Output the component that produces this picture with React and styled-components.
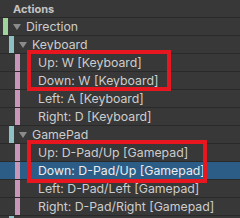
import styled, { createGlobalStyle } from 'styled-components';

const GlobalStyle = createGlobalStyle`
  html, body {
    margin: 0;
    padding: 0;
    background: #383838;
  }
  body {
    font-family: Inter, "Noto Sans", sans-serif;
    overflow: hidden;
  }
`;

const Panel = styled.div`
  position: relative;
  width: 240px;
  height: 218px;
  background: #383838;
  overflow: hidden;
`;

const Header = styled.div`
  height: 17px;
  border-bottom: 1px solid #2a2a2a;
  display: flex;
  align-items: center;
  padding-left: 13px;
  font-size: 11px;
  font-weight: 700;
  color: #c4c4c4;
`;

const Row = styled.div`
  height: 17px;
  border-bottom: 1px solid #2a2a2a;
  display: flex;
  align-items: stretch;
  background: ${(p) => (p.$selected ? '#2c5d87' : 'transparent')};
  color: ${(p) => (p.$selected ? '#ededed' : '#cdcdcd')};
  font-size: 12.3px;
  white-space: nowrap;
`;

const Strip = styled.div`
  width: 5px;
  margin-left: ${(p) => 3 + p.$depth * 6}px;
  background: ${(p) => p.$color};
  flex-shrink: 0;
`;

const Arrow = styled.div`
  width: 8px;
  margin-left: 5px;
  margin-right: 5px;
  flex-shrink: 0;
  display: flex;
  align-items: center;
  justify-content: center;
`;

const Label = styled.span`
  display: flex;
  align-items: center;
  line-height: 17px;
`;

const Marker = styled.div`
  position: absolute;
  box-sizing: border-box;
  border: 4px solid #e8161e;
  pointer-events: none;
`;

const colors = ['#9fd49a', '#8ec1c3', '#c796b8'];

const rows = [
  { depth: 0, text: 'Direction', group: true },
  { depth: 1, text: 'Keyboard', group: true },
  { depth: 2, text: 'Up: W [Keyboard]' },
  { depth: 2, text: 'Down: W [Keyboard]' },
  { depth: 2, text: 'Left: A [Keyboard]' },
  { depth: 2, text: 'Right: D [Keyboard]' },
  { depth: 1, text: 'GamePad', group: true },
  { depth: 2, text: 'Up: D-Pad/Up [Gamepad]' },
  { depth: 2, text: 'Down: D-Pad/Up [Gamepad]', selected: true },
  { depth: 2, text: 'Left: D-Pad/Left [Gamepad]' },
  { depth: 2, text: 'Right: D-Pad/Right [Gamepad]' },
  { depth: 1, text: '', group: true },
];

const Triangle = () => (
  <svg width="8" height="6" viewBox="0 0 8 6">
    <path d="M0 0 L8 0 L4 6 Z" fill="#8b8b8b" />
  </svg>
);

const App = () => {
  return (
    <Panel>
      <GlobalStyle />
      <Header>Actions</Header>
      {rows.map((r, i) => (
        <Row key={i} $selected={r.selected}>
          <Strip $depth={r.depth} $color={colors[r.depth]} />
          <Arrow>{r.group && r.text && <Triangle />}</Arrow>
          <Label>{r.text}</Label>
        </Row>
      ))}
      <Marker style={{ left: 27, top: 50, width: 144, height: 41 }} />
      <Marker style={{ left: 27, top: 140, width: 180, height: 43 }} />
    </Panel>
  );
};

export default App;
